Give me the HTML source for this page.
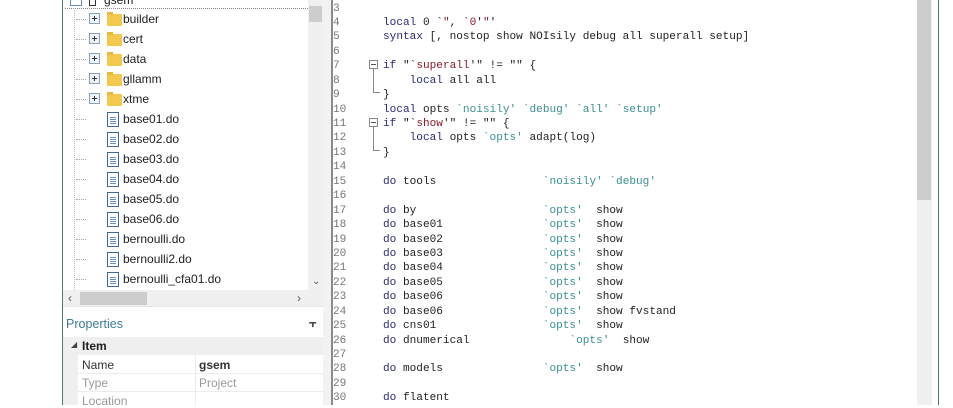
<!DOCTYPE html>
<html><head><meta charset="utf-8"><style>
*{margin:0;padding:0;box-sizing:border-box}
body{width:953px;height:405px;overflow:hidden;background:#fff;position:relative;font-family:"Liberation Sans",sans-serif}
.abs{position:absolute}
.t{position:absolute;font-size:12px;color:#1e1e1e;white-space:nowrap}
.code{position:absolute;left:383px;font-family:"Liberation Mono",monospace;font-size:11.1px;white-space:pre;color:#222;line-height:14.44px}
.ln{position:absolute;left:333px;width:15px;text-align:left;font-family:"Liberation Mono",monospace;font-size:11.1px;color:#777;line-height:14.44px;white-space:pre}
.k{color:#2a2a7a}.s{color:#8b1a2a}.m{color:#3a9090}
.fold{position:absolute;width:9px;height:9px;border:1px solid #888;background:#fff}
.fold:after{content:"";position:absolute;left:1px;top:3px;width:5px;height:1px;background:#555}
.plus{position:absolute;width:11px;height:11px;border:1px solid #8aa0b8;background:#eef3f8}
.plus:before{content:"";position:absolute;left:2px;top:4px;width:5px;height:1px;background:#333}
.plus:after{content:"";position:absolute;left:4px;top:2px;width:1px;height:5px;background:#333}
.folder{position:absolute;width:15px;height:12px;background:#f2c94c;border-radius:1px}
.folder:before{content:"";position:absolute;left:0;top:-2px;width:6px;height:3px;background:#e6b93b}
.doc{position:absolute;width:12px;height:15px;border:1px solid #3d6a9e;background:#fff}
.doc:after{content:"";position:absolute;left:2px;top:4px;width:6px;height:7px;background:repeating-linear-gradient(#6b8fba 0 1px,transparent 1px 2px)}
.dots{position:absolute;border-top:1px dotted #aaa;width:10px}
</style></head><body>
<div class="abs" style="left:62px;top:0;width:1px;height:405px;background:#4a7a7a"></div>
<div class="abs" style="left:65px;top:8px;width:243px;border-top:1px dotted #888"></div>
<div class="abs" style="left:70px;top:0;width:12px;height:6px;border:1px solid #6a8ab0;border-top:none"></div>
<div class="abs" style="left:89px;top:0;width:7px;height:6px;border:1px solid #333;border-top:none"></div>
<div class="t" style="left:104px;top:-7px">gsem</div>
<div class="abs" style="left:74px;top:10px;height:280px;border-left:1px dotted #bbb"></div>
<div class="abs" style="left:308px;top:0;width:15px;height:290px;background:#f0f0f0"></div>
<div class="abs" style="left:309px;top:6px;width:13px;height:16px;background:#cdcdcd"></div>
<div class="t" style="left:312px;top:276px;font-size:10px;color:#555">&#8964;</div>
<div class="t" style="left:312px;top:-6px;font-size:10px;color:#555">&#8963;</div>
<div class="abs" style="left:63px;top:290px;width:260px;height:16px;background:#f0f0f0"></div>
<div class="abs" style="left:80px;top:292px;width:67px;height:13px;background:#cdcdcd"></div>
<div class="t" style="left:68px;top:291px;color:#555">&lsaquo;</div>
<div class="t" style="left:297px;top:291px;color:#555">&rsaquo;</div>

<div class="dots" style="left:76px;top:19px"></div><div class="plus" style="left:89px;top:13px"></div><div class="folder" style="left:107px;top:14px"></div><div class="t" style="left:123px;top:12px">builder</div>
<div class="dots" style="left:76px;top:39px"></div><div class="plus" style="left:89px;top:33px"></div><div class="folder" style="left:107px;top:34px"></div><div class="t" style="left:123px;top:32px">cert</div>
<div class="dots" style="left:76px;top:59px"></div><div class="plus" style="left:89px;top:53px"></div><div class="folder" style="left:107px;top:54px"></div><div class="t" style="left:123px;top:52px">data</div>
<div class="dots" style="left:76px;top:79px"></div><div class="plus" style="left:89px;top:73px"></div><div class="folder" style="left:107px;top:74px"></div><div class="t" style="left:123px;top:72px">gllamm</div>
<div class="dots" style="left:76px;top:99px"></div><div class="plus" style="left:89px;top:93px"></div><div class="folder" style="left:107px;top:94px"></div><div class="t" style="left:123px;top:92px">xtme</div>
<div class="dots" style="left:76px;top:119px"></div><div class="doc" style="left:107px;top:112px"></div><div class="t" style="left:123px;top:112px">base01.do</div>
<div class="dots" style="left:76px;top:139px"></div><div class="doc" style="left:107px;top:132px"></div><div class="t" style="left:123px;top:132px">base02.do</div>
<div class="dots" style="left:76px;top:159px"></div><div class="doc" style="left:107px;top:152px"></div><div class="t" style="left:123px;top:152px">base03.do</div>
<div class="dots" style="left:76px;top:179px"></div><div class="doc" style="left:107px;top:172px"></div><div class="t" style="left:123px;top:172px">base04.do</div>
<div class="dots" style="left:76px;top:199px"></div><div class="doc" style="left:107px;top:192px"></div><div class="t" style="left:123px;top:192px">base05.do</div>
<div class="dots" style="left:76px;top:219px"></div><div class="doc" style="left:107px;top:212px"></div><div class="t" style="left:123px;top:212px">base06.do</div>
<div class="dots" style="left:76px;top:239px"></div><div class="doc" style="left:107px;top:232px"></div><div class="t" style="left:123px;top:232px">bernoulli.do</div>
<div class="dots" style="left:76px;top:259px"></div><div class="doc" style="left:107px;top:252px"></div><div class="t" style="left:123px;top:252px">bernoulli2.do</div>
<div class="dots" style="left:76px;top:279px"></div><div class="doc" style="left:107px;top:272px"></div><div class="t" style="left:123px;top:272px">bernoulli_cfa01.do</div>

<div class="abs" style="left:63px;top:306px;width:260px;height:1px;background:#e6e6e6"></div>
<div class="t" style="left:66px;top:317px;font-size:12.5px;color:#3a7c98">Properties</div>
<div class="t" style="left:309px;top:316px;font-size:12px;color:#333;font-weight:bold">&#x2ADF;</div>
<div class="abs" style="left:63px;top:337px;width:260px;height:18px;background:#efefef"></div>
<div class="abs" style="left:63px;top:355px;width:15px;height:50px;background:#efefef"></div>
<div class="t" style="left:71px;top:340px;font-size:8px;color:#444">&#9698;</div>
<div class="t" style="left:82px;top:339px;font-weight:bold">Item</div>
<div class="abs" style="left:78px;top:373px;width:245px;height:1px;background:#ececec"></div>
<div class="abs" style="left:78px;top:391px;width:245px;height:1px;background:#ececec"></div>
<div class="abs" style="left:195px;top:355px;width:1px;height:50px;background:#ececec"></div>
<div class="t" style="left:82px;top:358px;color:#333">Name</div>
<div class="t" style="left:199px;top:358px;font-weight:bold;color:#333">gsem</div>
<div class="t" style="left:82px;top:376px;color:#999">Type</div>
<div class="t" style="left:199px;top:376px;color:#999">Project</div>
<div class="t" style="left:82px;top:394px;color:#999">Location</div>

<div class="abs" style="left:323px;top:0;width:9px;height:405px;background:#f2f2f2"></div>
<div class="abs" style="left:331px;top:0;width:2px;height:405px;background:#8a8a8a"></div>
<div class="abs" style="left:917px;top:0;width:15px;height:405px;background:#f0f0f0"></div>
<div class="abs" style="left:917px;top:0;width:14px;height:200px;background:#cdcdcd"></div>
<div class="abs" style="left:938px;top:0;width:1px;height:405px;background:#4a7a7a"></div>

<div class="ln" style="top:1.5px">3
4
5
6
7
8
9
10
11
12
13
14
15
16
17
18
19
20
21
22
23
24
25
26
27
28
29
30</div>
<div class="fold" style="left:369px;top:60px"></div>
<div class="abs" style="left:373px;top:69px;width:1px;height:23px;background:#888"></div>
<div class="abs" style="left:373px;top:92px;width:7px;height:1px;background:#888"></div>
<div class="fold" style="left:369px;top:118px"></div>
<div class="abs" style="left:373px;top:127px;width:1px;height:23px;background:#888"></div>
<div class="abs" style="left:373px;top:150px;width:7px;height:1px;background:#888"></div>
<div class="code" style="top:1.5px">
<span class="k">local</span> 0 `<span class="s">"</span>, `<span class="s">0</span>'<span class="s">"</span>'
<span class="k">syntax</span> [, nostop show NOIsily debug all superall setup]

<span class="k">if</span> "`<span class="s">superall</span>'" != "" {
    <span class="k">local</span> all all
}
<span class="k">local</span> opts <span class="m">`noisily'</span> <span class="m">`debug'</span> <span class="m">`all'</span> <span class="m">`setup'</span>
<span class="k">if</span> "`<span class="s">show</span>'" != "" {
    <span class="k">local</span> opts <span class="m">`opts'</span> adapt(log)
}

<span class="k">do</span> tools                <span class="m">`noisily'</span> <span class="m">`debug'</span>

<span class="k">do</span> by                   <span class="m">`opts'</span>  show
<span class="k">do</span> base01               <span class="m">`opts'</span>  show
<span class="k">do</span> base02               <span class="m">`opts'</span>  show
<span class="k">do</span> base03               <span class="m">`opts'</span>  show
<span class="k">do</span> base04               <span class="m">`opts'</span>  show
<span class="k">do</span> base05               <span class="m">`opts'</span>  show
<span class="k">do</span> base06               <span class="m">`opts'</span>  show
<span class="k">do</span> base06               <span class="m">`opts'</span>  show fvstand
<span class="k">do</span> cns01                <span class="m">`opts'</span>  show
<span class="k">do</span> dnumerical               <span class="m">`opts'</span>  show

<span class="k">do</span> models               <span class="m">`opts'</span>  show

<span class="k">do</span> flatent</div>
</body></html>
